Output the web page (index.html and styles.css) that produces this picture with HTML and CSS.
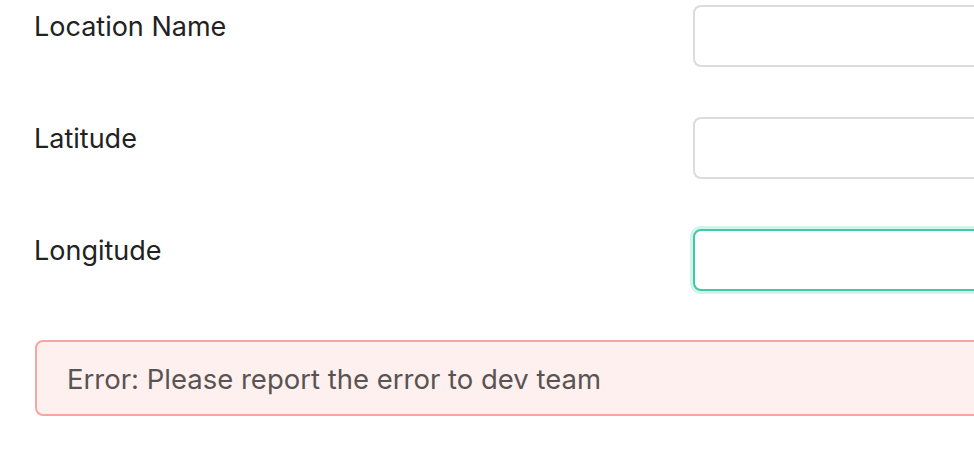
FILE: index.html
```html
<!DOCTYPE html>
<html lang="en">
<head>
    <meta charset="UTF-8">
    <meta name="viewport" content="width=device-width, initial-scale=1.0">
    <title>Add Location</title>
    <link rel="stylesheet" href="styles.css">
</head>
<body>
    <form class="location-form">
        <div class="form-row">
            <label for="location-name">Location Name</label>
            <input type="text" id="location-name" class="form-input">
        </div>
        <div class="form-row">
            <label for="latitude">Latitude</label>
            <input type="text" id="latitude" class="form-input">
        </div>
        <div class="form-row">
            <label for="longitude">Longitude</label>
            <input type="text" id="longitude" class="form-input focused">
        </div>
        <div class="error-box">Error: Please report the error to dev team</div>
    </form>
</body>
</html>
```

FILE: styles.css
```css
:root {
    --text-color: #222;
    --border-color: #dcdcdc;
    --focus-color: #3ec9a7;
    --focus-ring: #d2f2ea;
    --error-border: #fca5a0;
    --error-bg: #fff0f0;
    --error-text: #595452;
}

html, body {
    margin: 0;
    overflow: hidden;
}

body {
    font-family: 'Inter', 'Noto Sans', sans-serif;
    background: white;
    color: var(--text-color);
    padding: 5px 0 0 35px;
}

.location-form {
    display: flex;
    flex-direction: column;
    gap: 50px;
}

.form-row {
    display: flex;
    align-items: flex-start;
    height: 62px;
}

.form-row label {
    width: 658px;
    flex-shrink: 0;
    font-size: 27px;
    line-height: 32px;
    padding-top: 6px;
    margin-left: -1px;
}

.form-input {
    box-sizing: border-box;
    width: 400px;
    height: 62px;
    margin-left: 1px;
    border: 2px solid var(--border-color);
    border-radius: 8px;
    outline: none;
    background: white;
    flex-shrink: 0;
}

.form-input.focused {
    border-color: var(--focus-color);
    box-shadow: 0 0 0 3px var(--focus-ring);
}

.error-box {
    box-sizing: border-box;
    width: 1000px;
    height: 76px;
    margin-top: -1px;
    border: 2px solid var(--error-border);
    border-radius: 8px;
    background: var(--error-bg);
    color: var(--error-text);
    font-size: 27.5px;
    line-height: 74px;
    padding-left: 30px;
}
```
